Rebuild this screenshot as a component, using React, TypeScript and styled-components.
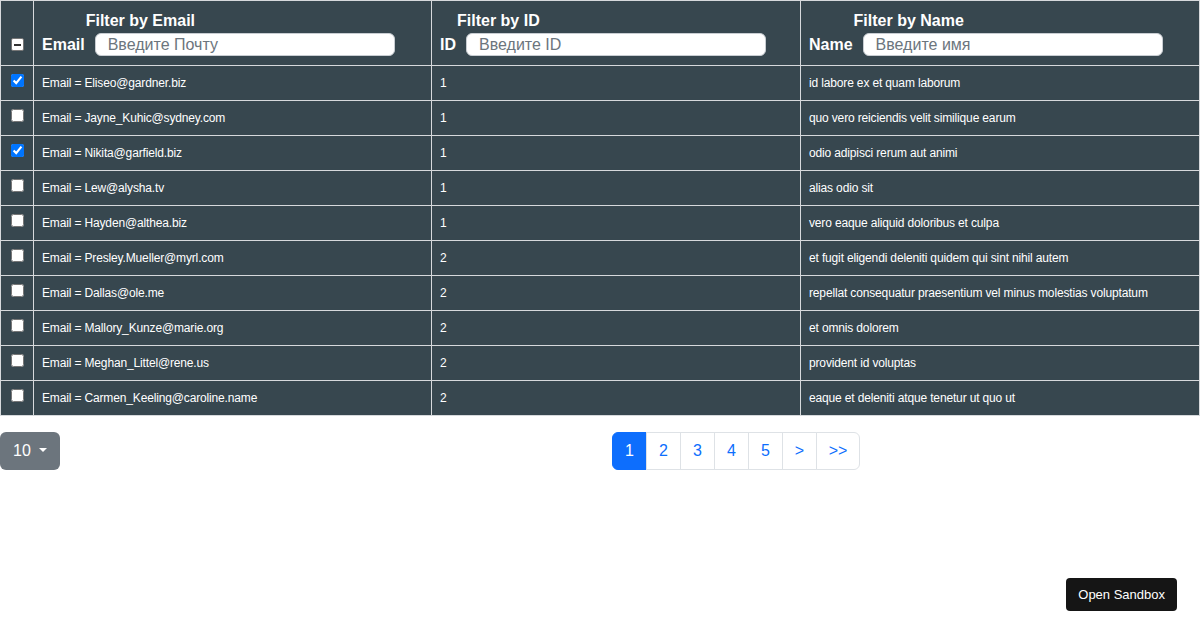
import React, { useState } from "react"
import styled, { createGlobalStyle } from "styled-components"

const GlobalStyle = createGlobalStyle`
  html, body {
    margin: 0;
    padding: 0;
    background: #fff;
    font-family: "Liberation Sans", Arial, sans-serif;
  }
  * {
    box-sizing: border-box;
  }
`

const Page = styled.div`
  width: 1200px;
`

const Table = styled.table`
  width: 100%;
  border-collapse: collapse;
  background: #37474f;
  color: #fff;
  table-layout: fixed;
`

const HeadCell = styled.th<{ $w?: number }>`
  width: ${(p) => (p.$w ? `${p.$w}px` : "auto")};
  height: 65px;
  border: 1px solid #d6d9dc;
  padding: 0 8px;
  text-align: left;
  vertical-align: bottom;
  font-size: 16px;
  font-weight: bold;
`

const CheckHead = styled.th`
  width: 33px;
  border: 1px solid #d6d9dc;
  padding: 0;
  vertical-align: bottom;
  text-align: center;
`

const HeadInner = styled.div`
  display: flex;
  align-items: flex-end;
  gap: 10px;
  padding-bottom: 9px;
`

const Title = styled.span`
  line-height: 20px;
  padding-bottom: 1px;
`

const FilterBlock = styled.label`
  display: flex;
  flex-direction: column;
  flex: 1;
  max-width: 300px;
`

const FilterLabel = styled.span`
  margin-left: -9px;
  line-height: 20px;
  margin-bottom: 2px;
`

const FilterInput = styled.input`
  height: 23px;
  width: 100%;
  border: 1px solid #c8cdd2;
  border-radius: 6px;
  padding: 0 12px;
  font-family: "Liberation Sans", Arial, sans-serif;
  font-size: 16px;
  color: #212529;
  background: #fff;
  outline: none;

  &::placeholder {
    color: #6c757d;
  }
`

const Indeterminate = styled.span`
  display: inline-flex;
  align-items: center;
  justify-content: center;
  width: 13px;
  height: 13px;
  margin-bottom: 14px;
  background: #fff;
  border: 1px solid #767676;
  border-radius: 2px;

  &::after {
    content: "";
    width: 7px;
    height: 2px;
    background: #333;
  }
`

const Row = styled.tr`
  height: 35px;
`

const Cell = styled.td`
  border: 1px solid #d6d9dc;
  padding: 0 8px;
  font-size: 12px;
  letter-spacing: -0.15px;
  vertical-align: middle;
`

const CheckCell = styled.td`
  border: 1px solid #d6d9dc;
  padding: 0;
  text-align: center;
  vertical-align: middle;
`

const Check = styled.input`
  width: 13px;
  height: 13px;
  margin: -6px 0 0 0;
  vertical-align: middle;
`

const Footer = styled.div`
  display: grid;
  grid-template-columns: 600px 600px;
  margin-top: 16px;
`

const SizeButton = styled.button`
  display: inline-flex;
  align-items: center;
  gap: 8px;
  height: 38px;
  padding: 0 13px;
  border: none;
  border-radius: 6px;
  background: #6c757d;
  color: #fff;
  font-family: "Liberation Sans", Arial, sans-serif;
  font-size: 16px;

  &::after {
    content: "";
    border-top: 4px solid #fff;
    border-left: 4px solid transparent;
    border-right: 4px solid transparent;
    margin-top: -2px;
  }
`

const Pager = styled.ul`
  display: flex;
  margin: 0;
  padding: 0 0 0 12px;
  list-style: none;
`

const PageItem = styled.li<{ $active?: boolean; $w: number }>`
  display: flex;
  align-items: center;
  justify-content: center;
  width: ${(p) => p.$w}px;
  height: 38px;
  font-size: 16px;
  color: ${(p) => (p.$active ? "#fff" : "#0d6efd")};
  background: ${(p) => (p.$active ? "#0d6efd" : "#fff")};
  border: 1px solid ${(p) => (p.$active ? "#0d6efd" : "#dee2e6")};
  margin-left: -1px;

  &:first-child {
    margin-left: 0;
    border-radius: 6px 0 0 6px;
  }
  &:last-child {
    border-radius: 0 6px 6px 0;
  }
`

const SandboxButton = styled.button`
  position: fixed;
  right: 23px;
  bottom: 19px;
  height: 33px;
  padding: 0 12px;
  border: none;
  border-radius: 4px;
  background: #151515;
  color: #fff;
  font-family: "Liberation Sans", Arial, sans-serif;
  font-size: 13px;
`

const rows = [
  { email: "Eliseo@gardner.biz", id: 1, name: "id labore ex et quam laborum", checked: true },
  { email: "Jayne_Kuhic@sydney.com", id: 1, name: "quo vero reiciendis velit similique earum" },
  { email: "Nikita@garfield.biz", id: 1, name: "odio adipisci rerum aut animi", checked: true },
  { email: "Lew@alysha.tv", id: 1, name: "alias odio sit" },
  { email: "Hayden@althea.biz", id: 1, name: "vero eaque aliquid doloribus et culpa" },
  { email: "Presley.Mueller@myrl.com", id: 2, name: "et fugit eligendi deleniti quidem qui sint nihil autem" },
  { email: "Dallas@ole.me", id: 2, name: "repellat consequatur praesentium vel minus molestias voluptatum" },
  { email: "Mallory_Kunze@marie.org", id: 2, name: "et omnis dolorem" },
  { email: "Meghan_Littel@rene.us", id: 2, name: "provident id voluptas" },
  { email: "Carmen_Keeling@caroline.name", id: 2, name: "eaque et deleniti atque tenetur ut quo ut" },
]

const pages = [
  { label: "1", w: 35, active: true },
  { label: "2", w: 35 },
  { label: "3", w: 35 },
  { label: "4", w: 35 },
  { label: "5", w: 35 },
  { label: ">", w: 35 },
  { label: ">>", w: 44 },
]

function FilterHeader({ title, label, placeholder, width }: { title: string; label: string; placeholder: string; width?: number }) {
  return (
    <HeadCell $w={width}>
      <HeadInner>
        <Title>{title}</Title>
        <FilterBlock>
          <FilterLabel>{label}</FilterLabel>
          <FilterInput placeholder={placeholder} />
        </FilterBlock>
      </HeadInner>
    </HeadCell>
  )
}

export default function App() {
  const [selected, setSelected] = useState(rows.map((r) => !!r.checked))

  return (
    <Page>
      <GlobalStyle />
      <Table>
        <thead>
          <tr>
            <CheckHead>
              <Indeterminate />
            </CheckHead>
            <FilterHeader title="Email" label="Filter by Email" placeholder="Введите Почту" width={398} />
            <FilterHeader title="ID" label="Filter by ID" placeholder="Введите ID" width={369} />
            <FilterHeader title="Name" label="Filter by Name" placeholder="Введите имя" />
          </tr>
        </thead>
        <tbody>
          {rows.map((r, i) => (
            <Row key={r.email}>
              <CheckCell>
                <Check
                  type="checkbox"
                  checked={selected[i]}
                  onChange={() => setSelected(selected.map((s, j) => (j === i ? !s : s)))}
                />
              </CheckCell>
              <Cell>Email = {r.email}</Cell>
              <Cell>{r.id}</Cell>
              <Cell>{r.name}</Cell>
            </Row>
          ))}
        </tbody>
      </Table>
      <Footer>
        <div>
          <SizeButton>10</SizeButton>
        </div>
        <Pager>
          {pages.map((p) => (
            <PageItem key={p.label} $w={p.w} $active={p.active}>
              {p.label}
            </PageItem>
          ))}
        </Pager>
      </Footer>
      <SandboxButton>Open Sandbox</SandboxButton>
    </Page>
  )
}
